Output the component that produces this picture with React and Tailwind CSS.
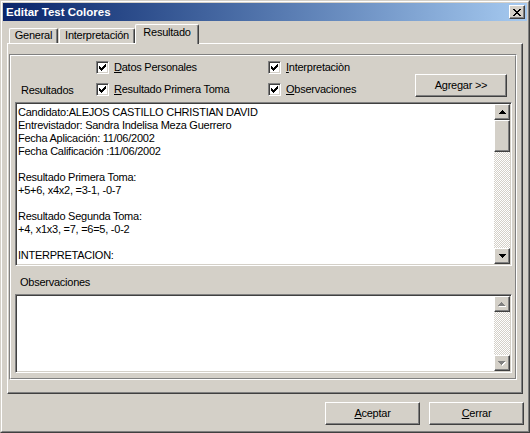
import React from 'react';

const raised = 'border border-t-white border-l-white border-r-[#404040] border-b-[#404040] shadow-[inset_-1px_-1px_0_#808080]';
const sunken = 'border border-t-[#808080] border-l-[#808080] border-r-white border-b-white shadow-[inset_1px_1px_0_#404040,inset_-1px_-1px_0_#d4d0c8]';
const checker = 'bg-[repeating-conic-gradient(#d4d0c8_0%_25%,#ffffff_0%_50%)] bg-[length:2px_2px]';

const CHECK = ['......x', '.....xx', 'x...xxx', 'xx.xxx.', 'xxxxx..', '.xxx...', '..x....'];
const CLOSE = ['xx....xx', '.xx..xx.', '..xxxx..', '...xx...', '..xxxx..', '.xx..xx.', 'xx....xx'];
const UP = ['...x...', '..xxx..', '.xxxxx.', 'xxxxxxx'];
const DOWN = [...UP].reverse();

// little pixel-art glyphs, one rect per pixel
const Pixels = ({ rows, color, shadow }) => {
  const w = rows[0].length + (shadow ? 1 : 0);
  const h = rows.length + (shadow ? 1 : 0);
  const cells = [];
  rows.forEach((r, y) => r.split('').forEach((c, x) => { if (c === 'x') cells.push([x, y]); }));
  return (
    <svg width={w} height={h} viewBox={`0 0 ${w} ${h}`} shapeRendering="crispEdges">
      {shadow && cells.map(([x, y]) => <rect key={'s' + x + '-' + y} x={x + 1} y={y + 1} width="1" height="1" fill={shadow} />)}
      {cells.map(([x, y]) => <rect key={x + '-' + y} x={x} y={y} width="1" height="1" fill={color} />)}
    </svg>
  );
};

const Key = ({ children }) => <span className="underline underline-offset-[1px]">{children}</span>;

const CheckBox = ({ k, rest }) => (
  <div className="h-[13px] flex items-center gap-[5px]">
    <span className={`w-[13px] h-[13px] shrink-0 bg-white flex items-center justify-center ${sunken}`}>
      <Pixels rows={CHECK} color="#000" />
    </span>
    <span className="leading-[13px] whitespace-nowrap"><Key>{k}</Key>{rest}</span>
  </div>
);

const ArrowBtn = ({ rows, disabled }) => (
  <div className={`h-[16px] shrink-0 bg-[#d4d0c8] flex items-center justify-center ${raised}`}>
    {disabled ? <Pixels rows={rows} color="#808080" shadow="#ffffff" /> : <Pixels rows={rows} color="#000" />}
  </div>
);

const ScrollBar = ({ thumb, disabled }) => (
  <div className="w-[16px] h-full shrink-0 flex flex-col">
    <ArrowBtn rows={UP} disabled={disabled} />
    <div className={`flex-1 ${checker}`}>
      {thumb && <div className={`h-[32px] bg-[#d4d0c8] ${raised}`} />}
    </div>
    <ArrowBtn rows={DOWN} disabled={disabled} />
  </div>
);

const resultado = [
  'Candidato:ALEJOS CASTILLO CHRISTIAN DAVID',
  'Entrevistador: Sandra Indelisa Meza Guerrero',
  'Fecha Aplicación: 11/06/2002',
  'Fecha Calificación :11/06/2002',
  '',
  'Resultado Primera Toma:',
  '+5+6, x4x2, =3-1, -0-7',
  '',
  'Resultado Segunda Toma:',
  '+4, x1x3, =7, =6=5, -0-2',
  '',
  'INTERPRETACION:',
];

export default function App() {
  return (
    <div className="w-[530px] h-[433px] bg-[#d4d0c8] text-black text-[11px] tracking-[-0.25px] font-['Liberation_Sans',Arial,sans-serif] border border-t-[#d4d0c8] border-l-[#d4d0c8] border-r-[#404040] border-b-[#404040] overflow-hidden">
      <div className="h-full border border-t-white border-l-white border-r-[#808080] border-b-[#808080] p-px flex flex-col">

        {/* title bar */}
        <div className="h-[18px] shrink-0 bg-linear-to-r from-[#0a246a] to-[#a6caf0] flex items-center justify-between pl-[3px] pr-[2px]">
          <span className="text-white font-bold text-[11.5px] tracking-normal leading-[18px]">Editar Test Colores</span>
          <div className={`w-[16px] h-[14px] bg-[#d4d0c8] flex items-center justify-center ${raised}`}>
            <Pixels rows={CLOSE} color="#000" />
          </div>
        </div>

        {/* tabs */}
        <div className="mt-[3px] h-[19px] shrink-0 flex items-end pl-[6px]">
          <div className={'w-[49px] h-[15px] flex justify-center leading-[13px] border-t border-l border-r border-t-white border-l-white border-r-[#404040] rounded-t-[2px] shadow-[inset_-1px_0_0_#808080]'}>General</div>
          <div className={'ml-px w-[76px] h-[15px] flex justify-center leading-[13px] border-t border-l border-r border-t-white border-l-white border-r-[#404040] rounded-t-[2px] shadow-[inset_-1px_0_0_#808080]'}>Interpretación</div>
          <div className={'relative z-10 -mb-px w-[64px] h-[20px] pt-px flex justify-center leading-[13px] bg-[#d4d0c8] border-t border-l border-r border-t-white border-l-white border-r-[#404040] rounded-t-[2px] shadow-[inset_-1px_0_0_#808080]'}>Resultado</div>
        </div>

        {/* tab page */}
        <div className="ml-[4px] w-[516px] h-[351px] shrink-0 pl-px pt-[10px] border border-t-white border-l-white border-r-[#404040] border-b-[#404040] shadow-[inset_-1px_-1px_0_#808080]">
          <div className="w-[508px] h-[326px] border border-t-[#808080] border-l-[#808080] border-r-white border-b-white">
            <div className="h-full border border-t-white border-l-white border-r-[#808080] border-b-[#808080] pl-[4px] pr-[3px] flex flex-col">

              <div className="h-[46px] shrink-0 flex">
                <div className="w-[81px] pl-[6px] pt-[28px] leading-[13px]">Resultados</div>
                <div className="w-[172px] pt-[5px] flex flex-col gap-[9px]">
                  <CheckBox k="D" rest="atos Personales" />
                  <CheckBox k="R" rest="esultado Primera Toma" />
                </div>
                <div className="w-[147px] pt-[5px] flex flex-col gap-[9px]">
                  <CheckBox k="I" rest="nterpretaciòn" />
                  <CheckBox k="O" rest="bservaciones" />
                </div>
                <button className={`mt-[18px] w-[92px] h-[23px] bg-[#d4d0c8] flex items-center justify-center leading-[13px] ${raised}`}>
                  Agregar &gt;&gt;
                </button>
              </div>

              <div className={`h-[164px] shrink-0 bg-white p-px flex ${sunken}`}>
                <div className="flex-1 pl-px pt-[2px] overflow-hidden whitespace-pre leading-[13px]">
                  {resultado.map((l, i) => <div key={i} className="h-[13px]">{l}</div>)}
                </div>
                <ScrollBar thumb />
              </div>

              <div className="h-[28px] shrink-0 pl-[5px] pt-[10px] leading-[13px]">Observaciones</div>

              <div className={`h-[79px] shrink-0 bg-white p-px flex ${sunken}`}>
                <div className="flex-1" />
                <ScrollBar disabled />
              </div>
            </div>
          </div>
        </div>

        {/* buttons */}
        <div className="mt-[8px] flex justify-end gap-[9px] pr-[3px]">
          <button className={`w-[95px] h-[23px] bg-[#d4d0c8] flex items-center justify-center leading-[13px] ${raised}`}>
            <span><Key>A</Key>ceptar</span>
          </button>
          <button className={`w-[95px] h-[23px] bg-[#d4d0c8] flex items-center justify-center leading-[13px] ${raised}`}>
            <span><Key>C</Key>errar</span>
          </button>
        </div>
      </div>
    </div>
  );
}
